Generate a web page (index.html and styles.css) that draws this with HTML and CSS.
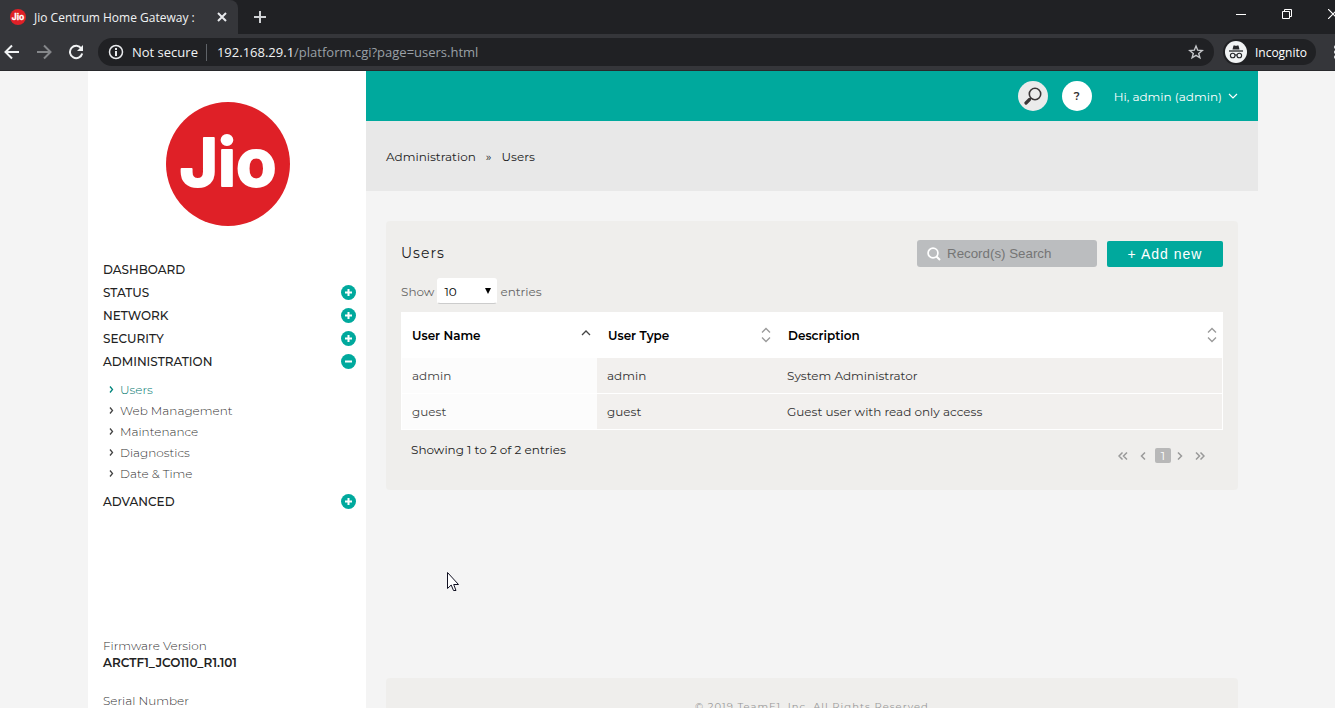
FILE: index.html
```html
<!DOCTYPE html>
<html lang="en">
<head>
    <meta charset="UTF-8">
    <meta name="viewport" content="width=device-width, initial-scale=1.0">
    <title>Jio Centrum Home Gateway :</title>
    <link rel="stylesheet" href="styles.css">
</head>
<body>

<div class="window">

    <!-- Browser tabs -->
    <div class="tab-strip">
        <div class="tab">
            <svg class="favicon" viewBox="0 0 124 124"><circle cx="62" cy="62" r="62"/><text x="62" y="84" text-anchor="middle">Jio</text></svg>
            <span class="tab-title">Jio Centrum Home Gateway :</span>
            <button class="tab-close" aria-label="Close tab">
                <svg width="10" height="10" viewBox="0 0 10 10"><path d="M1 1l8 8M9 1L1 9" stroke="#e8eaed" stroke-width="2"/></svg>
            </button>
        </div>
        <button class="new-tab" aria-label="New tab">
            <svg width="12" height="12" viewBox="0 0 12 12"><path d="M6 0v12M0 6h12" stroke="#d0d2d5" stroke-width="2"/></svg>
        </button>
        <div class="window-buttons">
            <button aria-label="Minimize"><svg width="10" height="10" viewBox="0 0 10 10"><path d="M0 5.500h10" stroke="#fff"/></svg></button>
            <button aria-label="Restore"><svg width="10" height="10" viewBox="0 0 10 10" fill="none" stroke="#fff"><path d="M.5 2.500h7v7h-7zM2.500 2.500v-2h7v7h-2"/></svg></button>
            <button aria-label="Close"><svg width="10" height="10" viewBox="0 0 10 10"><path d="M0 0l10 10M10 0L0 10" stroke="#fff" stroke-width="1.200"/></svg></button>
        </div>
    </div>

    <!-- Browser toolbar -->
    <div class="toolbar">
        <button class="tool" aria-label="Back">
            <svg width="16" height="16" viewBox="0 0 16 16"><path d="M15 8H2M8 1.500L1.500 8 8 14.500" fill="none" stroke="#f1f3f4" stroke-width="2"/></svg>
        </button>
        <button class="tool" aria-label="Forward">
            <svg width="16" height="16" viewBox="0 0 16 16"><path d="M1 8h13M8 1.500L14.500 8 8 14.500" fill="none" stroke="#85878a" stroke-width="2"/></svg>
        </button>
        <button class="tool" aria-label="Reload">
            <svg width="16" height="16" viewBox="0 0 16 16"><path d="M13.300 4.500A6.200 6.200 0 1 0 14.200 9.500" fill="none" stroke="#f1f3f4" stroke-width="2"/><path d="M15 1v6H9z" fill="#f1f3f4"/></svg>
        </button>
        <div class="address">
            <svg width="16" height="16" viewBox="0 0 16 16"><circle cx="8" cy="8" r="6.500" fill="none" stroke="#e8eaed" stroke-width="1.500"/><path d="M7 7h2v5H7zM7 4h2v2H7z" fill="#e8eaed"/></svg>
            <span class="not-secure">Not secure</span>
            <span class="url">192.168.29.1<span>/platform.cgi?page=users.html</span></span>
            <button class="bookmark" aria-label="Bookmark">
                <svg width="16" height="16" viewBox="0 0 16 16"><path d="M8 2l1.700 4.200 4.500.3-3.500 2.900 1.200 4.400L8 11.400l-3.900 2.400 1.200-4.400L1.800 6.500l4.500-.3z" fill="none" stroke="#c5c7ca" stroke-width="1.400"/></svg>
            </button>
        </div>
        <div class="incognito">
            <svg width="22" height="22" viewBox="0 0 22 22">
                <circle cx="11" cy="11" r="11" fill="#f1f3f4"/>
                <path d="M7.500 8.500l1-4h1.500l1 .5 1-.5h1.500l1 4z" fill="#26282b"/>
                <path d="M4 10h14" stroke="#26282b" stroke-width="1.300"/>
                <g fill="none" stroke="#26282b" stroke-width="1.100"><circle cx="7.700" cy="14.500" r="2.300"/><circle cx="14.300" cy="14.500" r="2.300"/><path d="M10 14.200q1-.7 2 0"/></g>
            </svg>
            <span>Incognito</span>
        </div>
        <button class="kebab" aria-label="Menu">
            <svg width="4" height="16" viewBox="0 0 4 16" fill="#e8eaed"><circle cx="2" cy="3" r="2"/><circle cx="2" cy="8" r="2"/><circle cx="2" cy="13" r="2"/></svg>
        </button>
    </div>

    <!-- Gateway page -->
    <div class="viewport">
        <div class="page">
            <aside class="sidebar">
                <svg class="logo" viewBox="0 0 124 124"><circle cx="62" cy="62" r="62"/><text x="62" y="84" text-anchor="middle">Jio</text></svg>

                <nav>
                    <ul class="menu">
                        <li><a href="#">DASHBOARD</a></li>
                        <li><a href="#">STATUS</a><svg class="toggle" viewBox="0 0 15 15"><circle cx="7.500" cy="7.500" r="7.500"/><path d="M7.500 4v7M4 7.500h7"/></svg></li>
                        <li><a href="#">NETWORK</a><svg class="toggle" viewBox="0 0 15 15"><circle cx="7.500" cy="7.500" r="7.500"/><path d="M7.500 4v7M4 7.500h7"/></svg></li>
                        <li><a href="#">SECURITY</a><svg class="toggle" viewBox="0 0 15 15"><circle cx="7.500" cy="7.500" r="7.500"/><path d="M7.500 4v7M4 7.500h7"/></svg></li>
                        <li><a href="#">ADMINISTRATION</a><svg class="toggle" viewBox="0 0 15 15"><circle cx="7.500" cy="7.500" r="7.500"/><path d="M4 7.500h7"/></svg></li>
                    </ul>
                    <ul class="submenu">
                        <li class="active"><svg viewBox="0 0 5 7"><path d="M1 .5l2.500 3L1 6.500"/></svg><a href="#">Users</a></li>
                        <li><svg viewBox="0 0 5 7"><path d="M1 .5l2.500 3L1 6.500"/></svg><a href="#">Web Management</a></li>
                        <li><svg viewBox="0 0 5 7"><path d="M1 .5l2.500 3L1 6.500"/></svg><a href="#">Maintenance</a></li>
                        <li><svg viewBox="0 0 5 7"><path d="M1 .5l2.500 3L1 6.500"/></svg><a href="#">Diagnostics</a></li>
                        <li><svg viewBox="0 0 5 7"><path d="M1 .5l2.500 3L1 6.500"/></svg><a href="#">Date &amp; Time</a></li>
                    </ul>
                    <ul class="menu">
                        <li><a href="#">ADVANCED</a><svg class="toggle" viewBox="0 0 15 15"><circle cx="7.500" cy="7.500" r="7.500"/><path d="M7.500 4v7M4 7.500h7"/></svg></li>
                    </ul>
                </nav>

                <dl class="device">
                    <dt>Firmware Version</dt>
                    <dd>ARCTF1_JCO110_R1.101</dd>
                    <dt>Serial Number</dt>
                </dl>
            </aside>

            <main class="content">
                <header class="topbar">
                    <button class="round search-btn" aria-label="Search">
                        <svg width="18" height="18" viewBox="0 0 18 18" fill="none" stroke="#3a3637"><circle cx="11" cy="7" r="5.700" stroke-width="1.600"/><path d="M6.800 11L5.500 12.300" stroke-width="1.500"/><path d="M5.500 12.500L2 16" stroke-width="3.200" stroke-linecap="round"/></svg>
                    </button>
                    <button class="round help-btn" aria-label="Help">?</button>
                    <a class="account" href="#">Hi, admin (admin)
                        <svg width="10" height="6" viewBox="0 0 10 6"><path d="M1 1l4 4 4-4" fill="none" stroke="#fff" stroke-width="1.200"/></svg>
                    </a>
                </header>

                <div class="breadcrumb">
                    <span>Administration</span><span>»</span><span>Users</span>
                </div>

                <section class="card">
                    <div class="card-head">
                        <h1>Users</h1>
                        <label class="record-search">
                            <svg width="14" height="14" viewBox="0 0 14 14" fill="none" stroke="#fff"><circle cx="6" cy="6" r="4.900" stroke-width="1.700"/><path d="M9.500 9.500l3.500 3.500" stroke-width="2"/></svg>
                            <input type="text" placeholder="Record(s) Search" aria-label="Record(s) Search">
                        </label>
                        <button class="add-new">+ Add new</button>
                    </div>

                    <div class="length">
                        <label for="entries">Show</label>
                        <span class="select-wrap">
                            <select id="entries">
                                <option>10</option>
                                <option>25</option>
                                <option>50</option>
                            </select>
                            <svg width="6" height="6" viewBox="0 0 6 6"><path d="M0 0h6L3 6z"/></svg>
                        </span>
                        <span>entries</span>
                    </div>

                    <table>
                        <colgroup><col class="col-name"><col class="col-type"><col></colgroup>
                        <thead>
                            <tr>
                                <th><div>User Name <svg class="sort asc" viewBox="0 0 10 16"><path d="M1 8l4-4 4 4"/></svg></div></th>
                                <th><div>User Type <svg class="sort" viewBox="0 0 10 16"><path d="M1 5.500l4-4 4 4M1 10.500l4 4 4-4"/></svg></div></th>
                                <th><div>Description <svg class="sort" viewBox="0 0 10 16"><path d="M1 5.500l4-4 4 4M1 10.500l4 4 4-4"/></svg></div></th>
                            </tr>
                        </thead>
                        <tbody>
                            <tr><td>admin</td><td>admin</td><td>System Administrator</td></tr>
                            <tr><td>guest</td><td>guest</td><td>Guest user with read only access</td></tr>
                        </tbody>
                    </table>

                    <div class="card-foot">
                        <span>Showing 1 to 2 of 2 entries</span>
                        <div class="pager">
                            <a href="#" aria-label="First"><svg width="10" height="8" viewBox="0 0 10 8"><path d="M4.500.5L1 4l3.500 3.500M9 .5L5.500 4 9 7.500"/></svg></a>
                            <a href="#" aria-label="Previous"><svg width="6" height="8" viewBox="0 0 6 8"><path d="M5 .5L1.500 4 5 7.500"/></svg></a>
                            <a href="#" class="current">1</a>
                            <a href="#" aria-label="Next"><svg width="6" height="8" viewBox="0 0 6 8"><path d="M1 .5L4.500 4 1 7.500"/></svg></a>
                            <a href="#" aria-label="Last"><svg width="10" height="8" viewBox="0 0 10 8"><path d="M1 .5L4.500 4 1 7.500M5.500.5L9 4 5.500 7.500"/></svg></a>
                        </div>
                    </div>
                </section>

                <footer>© 2019 TeamF1, Inc. All Rights Reserved</footer>
            </main>
        </div>
    </div>
</div>

<svg class="cursor" width="13" height="20" viewBox="0 0 13 20"><path d="M.5 .5v16l3.700-3.500 2.300 5.500h2.500l-2.300-6h4.800z" fill="#fff" stroke="#111122"/></svg>

</body>
</html>
```
FILE: styles.css
```css
* {
    box-sizing: border-box;
}

body {
    margin: 0;
    overflow: hidden;
    font-family: Montserrat, Inter, sans-serif;
    font-size: 12px;
    line-height: 17px;
    color: #222;
    background-color: #f4f4f4;
}

button {
    padding: 0;
    border: none;
    background: none;
    cursor: pointer;
}

a {
    color: inherit;
    text-decoration: none;
}

ul, dl, dd {
    margin: 0;
    padding: 0;
    list-style: none;
}

svg {
    display: block;
    flex: none;
}

/* the window runs a little past the right edge of the screen */
.window {
    display: flex;
    flex-direction: column;
    width: calc(100% + 11px);
    height: 100vh;
}

/* Browser */
.tab-strip {
    display: flex;
    height: 34px;
    background-color: #202124;
    font-family: "Segoe UI", "Open Sans", sans-serif;
    font-size: 12px;
    color: #f1f3f4;
}

.tab {
    display: flex;
    align-items: center;
    width: 238px;
    padding: 0 11px 0 10px;
    background-color: #35363a;
    border-radius: 0 8px 0 0;
}

.favicon {
    width: 16px;
    height: 16px;
    margin-right: 8px;
}

.tab-title {
    flex: 1;
    white-space: nowrap;
}

.new-tab {
    width: 44px;
    display: flex;
    align-items: center;
    justify-content: center;
}

.window-buttons {
    display: flex;
    height: 28px;
    margin-left: auto;
    margin-right: -10px;
}

.window-buttons button {
    width: 46px;
    display: flex;
    align-items: center;
    justify-content: center;
}

.toolbar {
    display: flex;
    align-items: center;
    height: 37px;
    padding: 0 8px 0 4px;
    background-color: #35363a;
    border-bottom: 1px solid #28292c;
    font-family: "Segoe UI", "Open Sans", sans-serif;
    font-size: 13px;
}

.tool {
    width: 16px;
    margin-right: 16px;
}

.tool:nth-child(3) {
    margin-right: 14px;
}

.address {
    flex: 1;
    display: flex;
    align-items: center;
    height: 28px;
    padding: 0 10px;
    border-radius: 14px;
    background-color: #202124;
    color: #f1f3f4;
}

.not-secure {
    margin-left: 8px;
    padding-right: 8px;
    border-right: 1px solid #5f6368;
}

.url {
    flex: 1;
    margin-left: 10px;
}

.url span {
    color: #9aa0a6;
}

.incognito {
    display: flex;
    align-items: center;
    gap: 8px;
    height: 26px;
    margin: 0 18px 0 9px;
    padding: 0 9px 0 2px;
    border-radius: 13px;
    background-color: #202124;
    font-size: 12px;
    color: #fff;
}

/* Gateway page */
.viewport {
    flex: 1;
    min-height: 0;
    overflow: hidden;
}

.page {
    display: flex;
    max-width: 1170px;
    min-height: 100%;
    margin: 0 auto;
}

.sidebar {
    width: 278px;
    padding: 31px 10px 0 15px;
    background-color: #fff;
}

.logo {
    width: 124px;
    height: 124px;
    margin: 0 auto 32px 63px;
}

.logo circle, .favicon circle {
    fill: #df2027;
}

.logo text, .favicon text {
    font-family: Inter, sans-serif;
    font-size: 66px;
    font-weight: 700;
    fill: #fff;
    stroke: #fff;
    stroke-width: 2px;
    stroke-linejoin: round;
}

.menu li {
    display: flex;
    align-items: center;
    justify-content: space-between;
    height: 23px;
    font-weight: 500;
}

.toggle {
    width: 15px;
    height: 15px;
    fill: #00a99d;
    stroke: #fff;
    stroke-width: 2px;
}

.toggle circle {
    stroke: none;
}

.submenu {
    margin: 6px 0;
    padding-left: 6px;
}

.submenu li {
    display: flex;
    align-items: center;
    gap: 6px;
    height: 21px;
    font-weight: 300;
    color: #333;
}

.submenu svg {
    width: 5px;
    height: 7px;
    fill: none;
    stroke: #444;
    stroke-width: 1.300px;
}

.submenu .active {
    color: #00766e;
}

.submenu .active svg {
    stroke: #00857c;
}

.device {
    margin-top: 124px;
}

.device dt {
    font-weight: 300;
    color: #333;
}

.device dd {
    margin-bottom: 21px;
    font-weight: 600;
}

.content {
    flex: 1;
}

.topbar {
    display: flex;
    align-items: center;
    justify-content: flex-end;
    height: 50px;
    padding-right: 20px;
    background-color: #00a99d;
    color: #fff;
}

.round {
    display: flex;
    align-items: center;
    justify-content: center;
    width: 30px;
    height: 30px;
    margin-right: 14px;
    border-radius: 50%;
    background-color: #fff;
}

.search-btn {
    background-color: #ebebeb;
}

.help-btn {
    margin-right: 22px;
    font-family: inherit;
    font-size: 11px;
    font-weight: 600;
    color: #333;
}

.account {
    display: flex;
    align-items: center;
    gap: 6px;
}

.breadcrumb {
    display: flex;
    align-items: center;
    gap: 10px;
    height: 70px;
    padding: 0 20px;
    background-color: #e8e8e8;
}

.card {
    height: 269px;
    margin: 30px 20px 0;
    padding: 19px 15px 0;
    border-radius: 4px;
    background-color: #efeeec;
}

.card-head {
    display: flex;
    align-items: center;
    gap: 10px;
    height: 27px;
}

.card-head h1 {
    flex: 1;
    margin: 0;
    font-size: 14px;
    font-weight: 400;
    letter-spacing: 1px;
}

.record-search {
    display: flex;
    align-items: center;
    gap: 6px;
    width: 180px;
    height: 27px;
    padding: 0 10px;
    border-radius: 3px;
    background-color: #bbbdbf;
}

.record-search input {
    flex: 1;
    min-width: 0;
    padding: 0;
    border: none;
    outline: none;
    background: none;
    font-family: Arial, "Liberation Sans", sans-serif;
}

.record-search input::placeholder {
    color: #757575;
}

.add-new {
    width: 116px;
    height: 26px;
    border-radius: 2px;
    background-color: #00a99d;
    font-family: Arial, "Liberation Sans", sans-serif;
    font-size: 14px;
    letter-spacing: 1px;
    color: #fff;
}

.length {
    display: flex;
    align-items: center;
    gap: 3px;
    margin: 11px 0 8px;
    color: #666;
}

.select-wrap {
    position: relative;
}

.select-wrap svg {
    position: absolute;
    right: 6px;
    top: 10px;
    pointer-events: none;
}

.length select {
    display: block;
    appearance: none;
    width: 60px;
    height: 26px;
    padding: 0 6px;
    border: 1px solid #fff;
    border-bottom-color: #ccc;
    border-radius: 3px;
    background-color: #fff;
    font-family: inherit;
    font-size: 12px;
    color: #000;
}

table {
    width: 100%;
    table-layout: fixed;
    border-collapse: separate;
    border-spacing: 0;
    background-color: #fff;
}

.col-name {
    width: 196px;
}

.col-type {
    width: 180px;
}

th {
    height: 46px;
    padding: 0 6px 0 11px;
    text-align: left;
    font-weight: 600;
    color: #000;
}

th div {
    display: flex;
    align-items: center;
    justify-content: space-between;
}

.sort {
    width: 10px;
    height: 16px;
    fill: none;
    stroke: #999;
    stroke-width: 1.300px;
}

.sort.asc {
    stroke: #444;
}

td {
    height: 36px;
    padding: 0 10px;
    border-bottom: 1px solid #fff;
    background-color: #f2f0ee;
    color: #333;
}

td:first-child {
    border-left: 1px solid #fff;
    background-color: #fcfcfc;
    color: #444;
}

td:last-child {
    border-right: 1px solid #fff;
}

.card-foot {
    display: flex;
    justify-content: space-between;
    padding: 11px 18px 0 10px;
}

.pager {
    display: flex;
    align-items: center;
    gap: 12px;
    height: 15px;
    margin-top: 7px;
}

.pager svg {
    fill: none;
    stroke: #999;
    stroke-width: 1.500px;
}

.pager .current {
    width: 16px;
    margin: 0 -6px 0 -3px;
    border-radius: 2px;
    background-color: #b8b8b8;
    line-height: 15px;
    text-align: center;
    color: #fff;
}

footer {
    margin: 188px 20px 0;
    padding: 20px 0;
    border-radius: 4px 4px 0 0;
    background-color: #efeeec;
    font-size: 10px;
    letter-spacing: 1px;
    text-align: center;
    color: #999;
}

/* mouse pointer lies over the page */
.cursor {
    position: absolute;
    left: 447px;
    top: 572px;
}
```
